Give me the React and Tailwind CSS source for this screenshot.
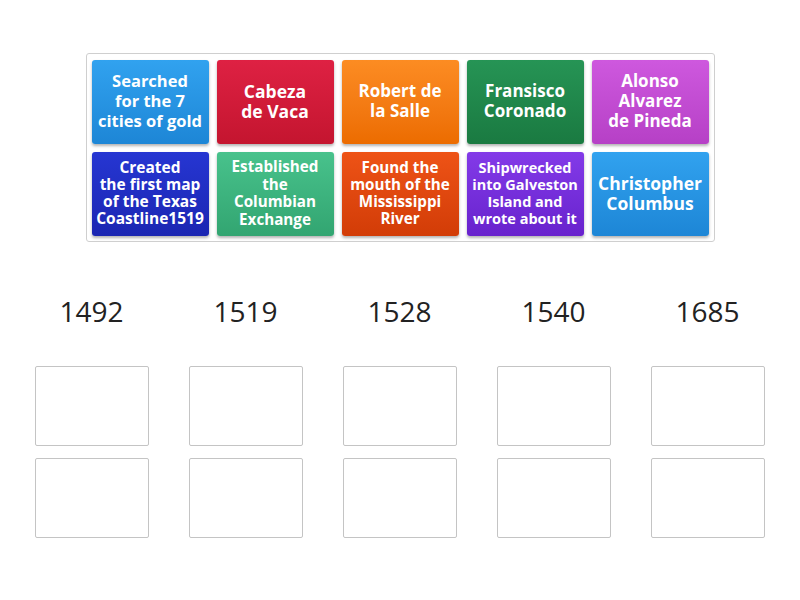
import React from "react";

const tiles = [
  { lines: ["Searched", "for the 7", "cities of gold"], bg: "bg-gradient-to-b from-[#31a2ef] to-[#1d86d6]", size: "text-[16.5px] leading-[20px]" },
  { lines: ["Cabeza", "de Vaca"], bg: "bg-gradient-to-b from-[#de2143] to-[#c4152f]", size: "text-[17.5px] leading-[20px]" },
  { lines: ["Robert de", "la Salle"], bg: "bg-gradient-to-b from-[#fc8c22] to-[#ec6c00]", size: "text-[17px] leading-[20px]" },
  { lines: ["Fransisco", "Coronado"], bg: "bg-gradient-to-b from-[#269455] to-[#1a7a41]", size: "text-[17px] leading-[20px]" },
  { lines: ["Alonso", "Alvarez", "de Pineda"], bg: "bg-gradient-to-b from-[#ce58de] to-[#b640c6]", size: "text-[17px] leading-[20px]" },
  { lines: ["Created", "the first map", "of the Texas", "Coastline1519"], bg: "bg-gradient-to-b from-[#2636d2] to-[#1b26b2]", size: "text-[15.5px] leading-[17px]" },
  { lines: ["Established", "the", "Columbian", "Exchange"], bg: "bg-gradient-to-b from-[#48c28c] to-[#32a571]", size: "text-[15.2px] leading-[17.5px]" },
  { lines: ["Found the", "mouth of the", "Mississippi", "River"], bg: "bg-gradient-to-b from-[#ee5316] to-[#d23c07]", size: "text-[15.2px] leading-[17px]" },
  { lines: ["Shipwrecked", "into Galveston", "Island and", "wrote about it"], bg: "bg-gradient-to-b from-[#833ae8] to-[#6822cd]", size: "text-[14.5px] leading-[17px]" },
  { lines: ["Christopher", "Columbus"], bg: "bg-gradient-to-b from-[#31a2ef] to-[#1d86d6]", size: "text-[17.5px] leading-[20px]" },
];

const years = ["1492", "1519", "1528", "1540", "1685"];

const Tile = ({ tile }) => (
  <div
    className={`${tile.bg} ${tile.size} w-[117px] h-[84px] rounded-[3px] shadow-[0_2px_3px_rgba(0,0,0,0.3)] flex items-center justify-center text-center text-white font-bold`}
  >
    <div className="-mt-[2px]">
      {tile.lines.map((l, i) => (
        <div key={i} className="whitespace-nowrap">{l}</div>
      ))}
    </div>
  </div>
);

export default function App() {
  return (
    <div
      className="w-[800px] h-[600px] bg-white flex flex-col items-center"
      style={{ fontFamily: '"Open Sans", "Noto Sans", sans-serif' }}
    >
      <div className="mt-[53px] border border-[#cfcfcf] rounded-[3px] p-[5px] pt-[6px]">
        <div className="grid grid-cols-5 gap-2">
          {tiles.map((t, i) => (
            <Tile key={i} tile={t} />
          ))}
        </div>
      </div>

      <div className="mt-[50px] grid grid-cols-[repeat(5,114px)] gap-x-[40px] -ml-[1px]">
        {years.map((y) => (
          <div key={y} className="flex flex-col items-center">
            <div className="h-[38px] flex items-center text-[28px] text-[#222] leading-none">{y}</div>
            <div className="mt-[36px] w-[114px] h-[80px] border border-[#c4c4c4] rounded-[2px]" />
            <div className="mt-[12px] w-[114px] h-[80px] border border-[#c4c4c4] rounded-[2px]" />
          </div>
        ))}
      </div>
    </div>
  );
}
